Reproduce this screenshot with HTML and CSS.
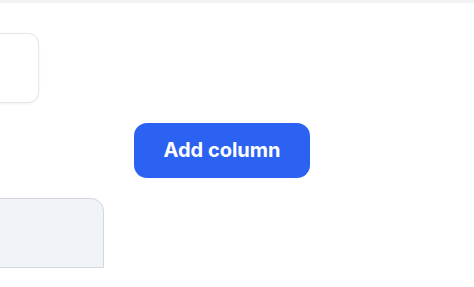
FILE: index.html
```html
<!DOCTYPE html>
<html>
<head>
<meta charset="utf-8">
<link rel="stylesheet" href="styles.css">
</head>
<body>
<div class="topbar"></div>
<div class="board">
  <div class="card-top"></div>
  <div class="action-row">
    <button class="add-btn">Add column</button>
  </div>
  <div class="card-bottom"></div>
</div>
</body>
</html>
```
FILE: styles.css
```css
html, body {
  margin: 0;
  padding: 0;
  background: #ffffff;
  width: 474px;
  height: 287px;
  overflow: hidden;
  font-family: Inter, "Liberation Sans", sans-serif;
}
.topbar {
  height: 3px;
  background: #f2f2f3;
}
.board {
  display: flex;
  flex-direction: column;
  padding-top: 30px;
}
.card-top {
  width: 59px;
  height: 68px;
  margin-left: -22px;
  border: 1px solid #e6e6e8;
  border-radius: 11px;
  background: #ffffff;
  box-shadow: 0 1px 3px rgba(0,0,0,0.06);
}
.action-row {
  display: flex;
  padding-left: 134px;
  margin-top: 20px;
}
.add-btn {
  width: 176px;
  height: 55px;
  border: none;
  border-radius: 13px;
  background: #2b62f1;
  color: #ffffff;
  font-family: Inter, "Liberation Sans", sans-serif;
  font-weight: 700;
  font-size: 20px;
  padding: 0 0 2px 0;
}
.card-bottom {
  width: 118px;
  height: 68px;
  margin-left: -16px;
  margin-top: 20px;
  border: 1px solid #d4d7dc;
  border-radius: 0 13px 0 0;
  background: #f0f4f9;
}
```
